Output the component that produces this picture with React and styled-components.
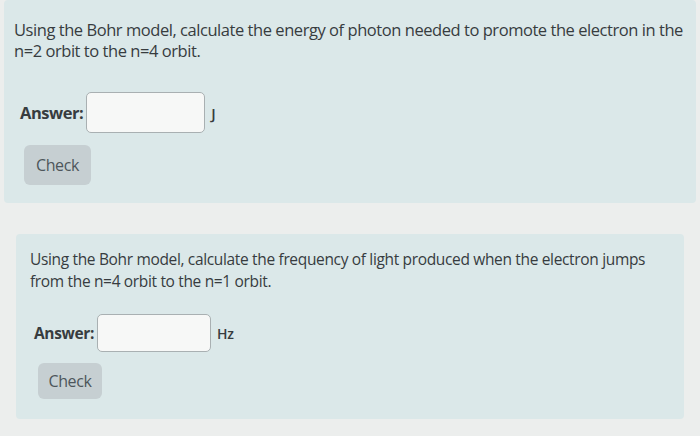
import React from 'react';
import styled, { createGlobalStyle } from 'styled-components';

const GlobalStyle = createGlobalStyle`
  html, body {
    margin: 0;
    padding: 0;
    background-color: #eceeed;
  }
  body {
    font-family: "Open Sans", "Noto Sans", sans-serif;
    color: #373c3f;
  }
`;

const Page = styled.div`
  width: 700px;
  height: 436px;
  overflow: hidden;
  display: flex;
  flex-direction: column;
`;

const Card = styled.div`
  background-color: #dbe8e9;
  border-radius: 4px;
  margin: ${({ $inset }) => $inset};
  padding: ${({ $pad }) => $pad};
  height: ${({ $h }) => $h};
  box-sizing: border-box;
  font-size: ${({ $size }) => $size};
  letter-spacing: ${({ $ls }) => $ls};
`;

const Question = styled.p`
  margin: 0;
  line-height: ${({ $lh }) => $lh};
`;

const AnswerRow = styled.div`
  display: flex;
  align-items: center;
  margin-top: ${({ $top }) => $top};
  padding-left: ${({ $indent }) => $indent};
`;

const Label = styled.span`
  font-weight: 700;
  margin-right: 3px;
`;

const Field = styled.input`
  width: ${({ $w }) => $w};
  height: ${({ $h }) => $h};
  box-sizing: border-box;
  background: #f7f8f7;
  border: 1px solid #a9b0b2;
  border-radius: 5px;
  margin: 0 6px 0 0;
`;

const Unit = styled.span`
  font-weight: 600;
  font-size: 0.9em;
`;

const CheckButton = styled.button`
  display: block;
  margin-top: ${({ $top }) => $top};
  margin-left: ${({ $indent }) => $indent};
  width: ${({ $w }) => $w};
  height: ${({ $h }) => $h};
  background-color: #c6cfd2;
  color: #4d565b;
  border: none;
  border-radius: 6px;
  font-family: inherit;
  font-size: 16px;
  letter-spacing: -0.4px;
  padding: 0;
`;

export default function App() {
  return (
    <>
      <GlobalStyle />
      <Page>
        <Card $inset="0 4px 0 4px" $pad="19px 10px 0 10px" $h="203px" $size="16.5px" $ls="-0.45px">
          <Question $lh="21px">
            Using the Bohr model, calculate the energy of photon needed to promote the electron in the
            n=2 orbit to the n=4 orbit.
          </Question>
          <AnswerRow $top="31px" $indent="6px">
            <Label>Answer:</Label>
            <Field $w="119px" $h="41px" />
            <Unit>J</Unit>
          </AnswerRow>
          <CheckButton $top="12px" $indent="10px" $w="67px" $h="40px">Check</CheckButton>
        </Card>
        <Card $inset="31px 16px 0 16px" $pad="14px 14px 0 14px" $h="185px" $size="15.5px" $ls="-0.34px">
          <Question $lh="22px">
            Using the Bohr model, calculate the frequency of light produced when the electron jumps
            from the n=4 orbit to the n=1 orbit.
          </Question>
          <AnswerRow $top="22px" $indent="4px">
            <Label>Answer:</Label>
            <Field $w="114px" $h="38px" />
            <Unit>Hz</Unit>
          </AnswerRow>
          <CheckButton $top="11px" $indent="8px" $w="64px" $h="36px">Check</CheckButton>
        </Card>
      </Page>
    </>
  );
}
